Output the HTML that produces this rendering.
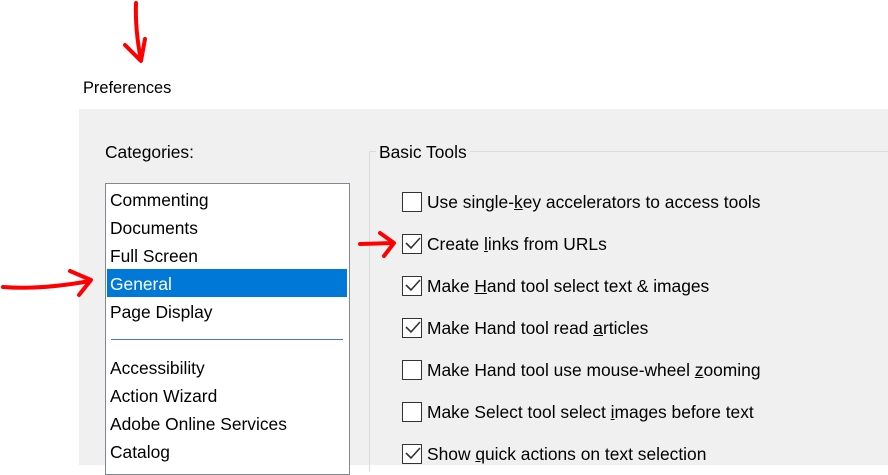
<!DOCTYPE html>
<html><head><style>
body{margin:0;width:888px;height:465px;overflow:hidden;background:#fff;position:relative;font-family:"Liberation Sans",sans-serif;color:#000}
.a{position:absolute;white-space:nowrap}
.t{font-size:17.4px;line-height:20px}
.panel{position:absolute;left:79px;top:109px;width:809px;height:356px;background:#f0f0f0}
.list{position:absolute;left:105px;top:183px;width:243px;height:290px;background:#fff;border:1px solid #828790}
.cb{position:absolute;left:402px;width:18px;height:18px;border:1px solid #333;background:#fff}
</style></head><body>
<div class="a t" style="left:83px;top:78px;font-size:16.4px">Preferences</div>
<div class="panel"></div>
<div class="a t" style="left:105px;top:142px">Categories:</div>
<div class="list"></div>
<div class="a" style="left:107px;top:269px;width:240px;height:28px;background:#0078d7"></div>
<div class="a" style="left:111px;top:339px;width:232px;height:1px;background:#3f7fb5"></div>
<div class="a t" style="left:110px;top:190px">Commenting</div>
<div class="a t" style="left:110px;top:218px">Documents</div>
<div class="a t" style="left:110px;top:246px">Full Screen</div>
<div class="a t" style="left:110px;top:274px;color:#fff">General</div>
<div class="a t" style="left:110px;top:302px">Page Display</div>
<div class="a t" style="left:110px;top:358px">Accessibility</div>
<div class="a t" style="left:110px;top:386px">Action Wizard</div>
<div class="a t" style="left:110px;top:414px">Adobe Online Services</div>
<div class="a t" style="left:110px;top:442px">Catalog</div>
<div class="a" style="left:369px;top:151px;width:519px;height:320px;border-left:1px solid #dcdcdc;border-top:1px solid #dcdcdc"></div>
<div class="a t" style="left:376px;top:142px;background:#f0f0f0;padding:0 3px">Basic Tools</div>
<div class="cb" style="top:192px"></div>
<div class="a t" style="left:427px;top:192px">Use single-<u>k</u>ey accelerators to access tools</div>
<div class="cb" style="top:234px"></div>
<div class="a t" style="left:427px;top:234px">Create <u>l</u>inks from URLs</div>
<div class="cb" style="top:276px"></div>
<div class="a t" style="left:427px;top:276px">Make <u>H</u>and tool select text &amp; images</div>
<div class="cb" style="top:318px"></div>
<div class="a t" style="left:427px;top:318px">Make Hand tool read <u>a</u>rticles</div>
<div class="cb" style="top:360px"></div>
<div class="a t" style="left:427px;top:360px">Make Hand tool use mouse-wheel <u>z</u>ooming</div>
<div class="cb" style="top:402px"></div>
<div class="a t" style="left:427px;top:402px">Make Select tool select <u>i</u>mages before text</div>
<div class="cb" style="top:444px"></div>
<div class="a t" style="left:427px;top:444px">Show <u>q</u>uick actions on text selection</div>
<svg class="a" style="left:0;top:0" width="888" height="465">
<g fill="none" stroke="#333" stroke-width="1.6">
<path d="M406 243 l5 5 l9 -10"/><path d="M406 285 l5 5 l9 -10"/><path d="M406 327 l5 5 l9 -10"/><path d="M406 453 l5 5 l9 -10"/>
</g>
<g fill="none" stroke="#f00" stroke-width="4" stroke-linecap="round" stroke-linejoin="round">
<path d="M136 3 Q135 30 141 60"/><path d="M125 45 L141 61 L145 39"/>
<path d="M3 287 Q40 290 90 281"/><path d="M70 271 L91 280 L79 295"/>
<path d="M360 244 L393 243"/><path d="M380 233 L394 243 L384 256"/>
</g>
</svg>
</body></html>
